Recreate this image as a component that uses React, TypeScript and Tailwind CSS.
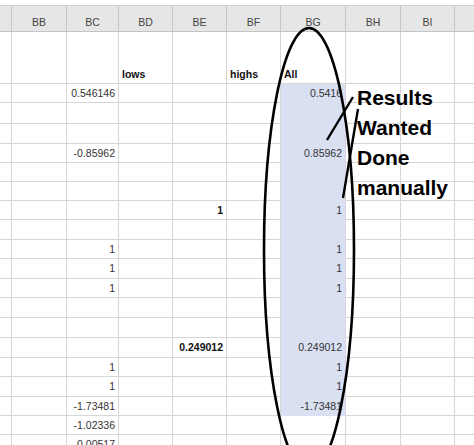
import React from "react";

const colW = ["w-[12px]", "w-[55px]", "w-[52px]", "w-[54px]", "w-[54px]", "w-[54px]", "w-[65px]", "w-[55px]", "w-[54px]", "flex-1"];
const headers = ["", "BB", "BC", "BD", "BE", "BF", "BG", "BH", "BI", ""];

type Cell = { t: string; b?: boolean };
type Row = { h: string; cells: Record<number, Cell> };

const rows: Row[] = [
  { h: "h-[19px]", cells: { 2: { t: "0.546146" }, 6: { t: "0.5416" } } },
  { h: "h-[21px]", cells: {} },
  { h: "h-[20px]", cells: {} },
  { h: "h-[19px]", cells: { 2: { t: "-0.85962" }, 6: { t: "0.85962" } } },
  { h: "h-[19px]", cells: {} },
  { h: "h-[19px]", cells: {} },
  { h: "h-[19px]", cells: { 4: { t: "1", b: true }, 6: { t: "1" } } },
  { h: "h-[20px]", cells: {} },
  { h: "h-[19px]", cells: { 2: { t: "1" }, 6: { t: "1" } } },
  { h: "h-[20px]", cells: { 2: { t: "1" }, 6: { t: "1" } } },
  { h: "h-[19px]", cells: { 2: { t: "1" }, 6: { t: "1" } } },
  { h: "h-[20px]", cells: {} },
  { h: "h-[20px]", cells: {} },
  { h: "h-[20px]", cells: { 4: { t: "0.249012", b: true }, 6: { t: "0.249012" } } },
  { h: "h-[19px]", cells: { 2: { t: "1" }, 6: { t: "1" } } },
  { h: "h-[20px]", cells: { 2: { t: "1" }, 6: { t: "1" } } },
  { h: "h-[19px]", cells: { 2: { t: "-1.73481" }, 6: { t: "-1.73481" } } },
  { h: "h-[19px]", cells: { 2: { t: "-1.02336" } } },
  { h: "h-[20px]", cells: { 2: { t: "-0.00517" } } },
];

const font = { fontFamily: '"Liberation Sans", Arial, sans-serif' };

export default function App() {
  return (
    <div className="relative w-[474px] h-[445px] overflow-hidden bg-white" style={font}>
      {/* top strip */}
      <div className="h-[6px] border-b border-[#d0d0d0] bg-white" />
      {/* column header row */}
      <div className="flex h-[26px] bg-[#e6e6e6] border-b border-[#c4c4c4]">
        {headers.map((h, i) => (
          <div
            key={i}
            className={`${colW[i]} shrink-0 flex items-end justify-center pb-[3px] text-[10.5px] leading-[12px] text-[#444] ${i < 9 ? "border-r border-[#c6c6c6]" : ""}`}
          >
            {h}
          </div>
        ))}
      </div>
      {/* tall label row */}
      <div className="flex h-[52px] border-b border-[#d6d6d6]">
        {headers.map((_, i) => (
          <div
            key={i}
            className={`${colW[i]} shrink-0 flex items-end pb-[3px] pl-[3px] text-[10.5px] leading-[12px] font-bold text-[#111] ${i < 9 ? "border-r border-[#d6d6d6]" : ""}`}
          >
            {i === 3 ? "lows" : i === 5 ? "highs" : i === 6 ? "All" : ""}
          </div>
        ))}
      </div>
      {/* data rows */}
      {rows.map((r, ri) => {
        const hl = ri < 17;
        return (
          <div key={ri} className={`flex ${r.h}`}>
            {headers.map((_, i) => {
              const c = r.cells[i];
              const isHl = hl && i === 6;
              return (
                <div
                  key={i}
                  className={`${colW[i]} shrink-0 flex items-center justify-end pr-[3px] pt-[1px] text-[10.5px] border-b ${
                    isHl ? "bg-[#d9e0f2] border-b-[#d9e0f2]" : "border-b-[#d6d6d6]"
                  } ${i < 9 ? "border-r border-r-[#d6d6d6]" : ""} ${c?.b ? "font-bold text-[#111]" : "text-[#333]"}`}
                >
                  {c?.t ?? ""}
                </div>
              );
            })}
          </div>
        );
      })}

      {/* annotation overlay */}
      <svg className="absolute left-0 top-0 pointer-events-none" width="474" height="445" viewBox="0 0 474 445">
        <ellipse cx="309" cy="250" rx="45" ry="222" fill="none" stroke="#000" strokeWidth="2.6" />
        <line x1="327" y1="140" x2="353" y2="97" stroke="#000" strokeWidth="2.4" />
        <line x1="358" y1="109" x2="343" y2="198" stroke="#000" strokeWidth="2.4" />
      </svg>
      <div className="absolute left-[357px] top-[83px] text-[21px] leading-[30px] font-bold text-black">
        <div>Results</div>
        <div>Wanted</div>
        <div>Done</div>
        <div>manually</div>
      </div>
    </div>
  );
}
